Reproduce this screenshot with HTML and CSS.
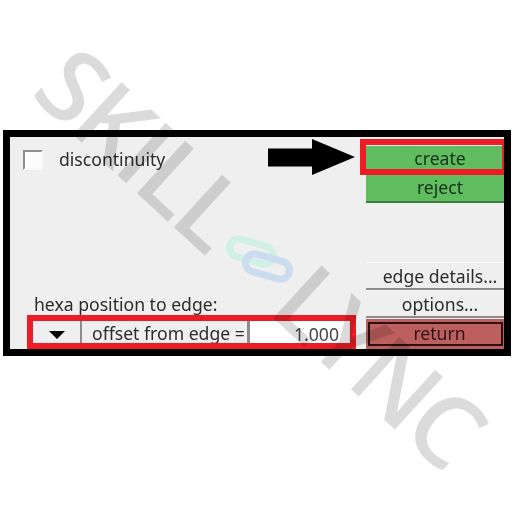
FILE: index.html
```html
<!DOCTYPE html>
<html lang="en">
<head>
<meta charset="utf-8">
<title>hexa position to edge</title>
<link rel="stylesheet" href="styles.css">
</head>
<body>
<main class="frame">
  <section class="left">
    <div class="top-row">
      <label class="check-row"><span class="checkbox"></span><span>discontinuity</span></label>
      <svg class="arrow" viewBox="0 0 88 36" width="88" height="36" aria-hidden="true"><path d="M0 9.500H44V0L87 18 44 36V27.500H0Z"/></svg>
    </div>
    <div class="bottom">
      <div class="hexa-label">hexa position to edge:</div>
      <div class="hexa-row">
        <div class="dropdown"><svg viewBox="0 0 16 8" width="16" height="8" aria-hidden="true"><path d="M0 0H16L8 8Z"/></svg></div>
        <div class="offset-label">offset from edge =</div>
        <div class="value">1.000</div>
      </div>
    </div>
  </section>
  <section class="right">
    <button class="btn green create">create</button>
    <button class="btn green reject">reject</button>
    <button class="btn plain push">edge details...</button>
    <button class="btn plain">options...</button>
    <button class="btn danger"><span>return</span></button>
  </section>
  <div class="mark mark-create"></div>
  <div class="mark mark-row"></div>
</main>
<div class="watermark">SKILL LYNC</div>
<svg class="logo" viewBox="0 0 80 60" width="80" height="60" aria-hidden="true">
  <rect class="link-a" x="9" y="14.500" width="45" height="18" rx="9" transform="rotate(16 31.500 23.500)"/>
  <rect class="link-b" x="25" y="29.500" width="45" height="18" rx="9" transform="rotate(16 47.500 38.500)"/>
</svg>
</body>
</html>
```
FILE: styles.css
```css
* { box-sizing: border-box; }
html, body { margin: 0; height: 514px; background: #fff; }
body { padding: 130px 3px 0; font-family: "Noto Sans", sans-serif; font-size: 17.6px; color: #2b2b2b; position: relative; }
.frame {
  position: relative;
  width: 508px;
  height: 226px;
  border: 7px solid #000;
  background: #efefef;
  display: flex;
  filter: blur(0.35px);
}
.left { flex: 1; display: flex; flex-direction: column; min-width: 0; }
.top-row { display: flex; align-items: flex-start; padding: 2px 0 0 13px; }
.check-row { display: flex; align-items: center; gap: 16px; padding-top: 9px; line-height: 19px; }
.checkbox {
  width: 20px; height: 20px; background: #fbfbfb; margin-top: 2px;
  border: 2px solid; border-color: #8e8e8e #f8f8f8 #f8f8f8 #8e8e8e;
}
.arrow { position: absolute; left: 258px; top: 2px; fill: #000; }
.bottom { margin-top: auto; padding-left: 24px; }
.hexa-label { line-height: 24px; margin-bottom: 5px; }
.hexa-row { display: flex; height: 23px; width: 316px; margin-left: -1px; margin-bottom: 5px; }
.dropdown { width: 49px; display: flex; align-items: center; justify-content: center; padding-top: 5px; border-right: 2px solid #8c8c8c; }
.offset-label { width: 168px; padding-left: 10px; line-height: 24px; white-space: nowrap; border-right: 3px solid #8c8c8c; }
.value { width: 99px; background: #fff; text-align: right; padding-right: 10px; line-height: 27px; color: #444; }
.right { width: 138px; flex: none; display: flex; flex-direction: column; padding-top: 9px; }
.btn { border: 0; padding: 0 0 0 10px; font: inherit; color: inherit; display: block; width: 100%; }
.green { background: #5fbd5f; color: #17301a; }
.create { height: 29px; padding-bottom: 8px; }
.reject { height: 28px; border-bottom: 2px solid #3d7d3d; padding-bottom: 3px; }
.push { margin-top: auto; }
.plain { height: 28px; background: #efefef; border-top: 1px solid #fafafa; border-bottom: 2px solid #8d8d8d; }
.danger { height: 30px; margin-top: 1px; padding: 3px 1px 3px 2px; background: #bd5f5f; color: #2d1414; }
.danger span { display: block; height: 24px; line-height: 19px; padding-left: 8px; border: 2px solid #2a1010; }
.mark { position: absolute; border: 6px solid #ee1c25; }
.mark-create { left: 350px; top: 2px; width: 144px; height: 36px; border-right-width: 2px; }
.mark-row { left: 17px; top: 178px; width: 329px; height: 34px; }
.watermark {
  position: absolute; left: 5px; top: 203px; width: 514px; display: flex; justify-content: center;
  font: 600 100px/104px "Open Sans", sans-serif; letter-spacing: -4px; word-spacing: 62px; white-space: nowrap;
  color: rgba(0,0,0,.14); transform: rotate(42.500deg); pointer-events: none;
}
.logo { position: absolute; left: 220px; top: 228px; fill: none; stroke-width: 7; pointer-events: none; }
.link-a { stroke: #d0f0e6; }
.link-b { stroke: #ccdcf0; }
```
